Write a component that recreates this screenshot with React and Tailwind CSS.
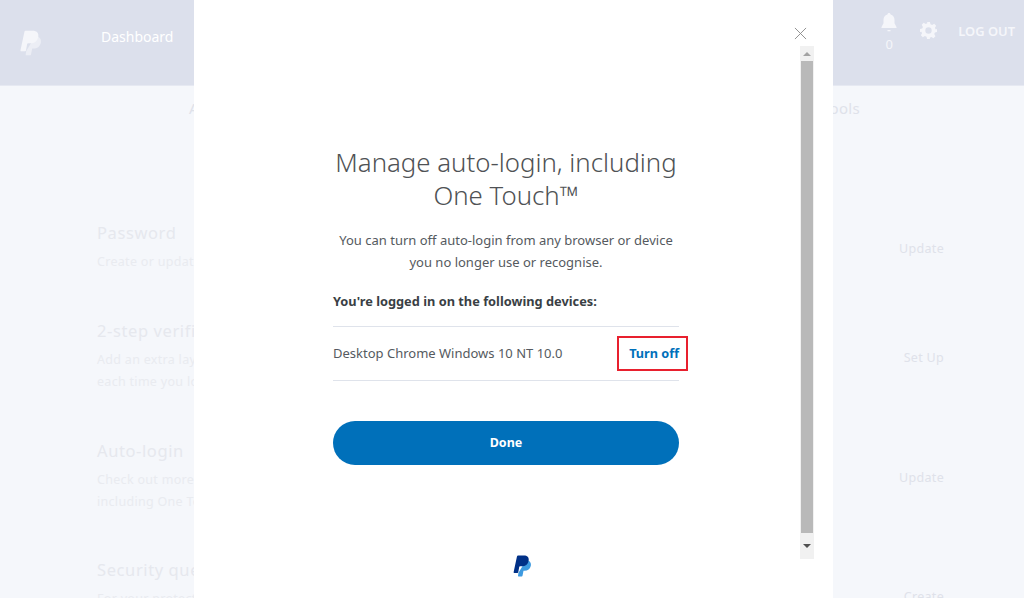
const font = { fontFamily: '"Noto Sans", "Open Sans", sans-serif' };

function PayPalMark({ className, back, front }) {
  return (
    <svg viewBox="0 0 20 24" className={className}>
      <path fill={back} d="M16.6 6.300c1.900 1 3 2.900 2.500 5.400-.8 3.600-3.400 5.400-6.900 5.400h-1.100L10 22.600c-.1.500-.4.800-.9.800H5.700c-.5 0-.7-.4-.6-.9l.5-3.100 7-11.500z" />
      <path fill={front} d="M5.300.6h6.200c3.600 0 5.900 1.900 5.200 5.600-.8 4.100-3.500 6.100-7.400 6.100H7.300c-.5 0-.8.3-.9.8l-1 5.700c-.1.500-.4.800-.9.800H1c-.5 0-.8-.4-.7-.9L3.900 1.800C4 1 4.500.6 5.300.6z" />
    </svg>
  );
}

function Row({ title, lines, action, className }) {
  return (
    <div className={`flex items-center justify-between ${className}`}>
      <div>
        <div className="text-[16.5px] leading-6 tracking-[0.6px] text-[#e6e8ee]">{title}</div>
        <div className="mt-[6px] text-[12.5px] leading-[22px] tracking-[0.3px] text-[#e9ebf0]">
          {lines.map((l) => (
            <div key={l}>{l}</div>
          ))}
        </div>
      </div>
      <div className="pt-[3px] text-[12.5px] leading-[18px] tracking-[0.3px] text-[#dfe2ea]">{action}</div>
    </div>
  );
}

export default function App() {
  return (
    <div className="relative h-[598px] w-[1024px] overflow-hidden bg-[#f5f7fb]" style={font}>
      <header className="flex h-[86px] items-start border-b border-[#e6e9f2] bg-[#dce0ec] text-white">
        <PayPalMark className="ml-[20px] mt-[30px] h-[26px] w-[22px]" back="#eceef5" front="#f5f6fa" />
        <div className="ml-[59px] mt-[27px] text-[14px] leading-5">Dashboard</div>
        <div className="ml-auto mt-[13px] flex flex-col items-center">
          <svg viewBox="0 0 16 20" className="h-[20px] w-[16px]" fill="#f5f6fa">
            <path d="M8 0c.9 0 1.500.6 1.600 1.500 2.500.7 3.900 2.700 3.900 5.500v3.300L15.500 14v1H.5v-1l2-3.700V7c0-2.800 1.400-4.800 3.900-5.500C6.500.6 7.100 0 8 0zM6.500 17h3v1.300h-3z" />
          </svg>
          <div className="mt-[1px] text-[13px] leading-5 text-[#f5f6fa]">0</div>
        </div>
        <svg viewBox="0 0 24 24" className="ml-[23px] mt-[22px] h-[17px] w-[17px]" fill="#f5f6fa">
          <path fillRule="evenodd" d="M10 0h4l.8 3.200 2.300 1 2.900-1.700 2.800 2.800-1.700 2.900 1 2.300L24 10v4l-2.900.8-1 2.300 1.700 2.900-2.800 2.800-2.900-1.700-2.300 1L14 24h-4l-.8-3.100-2.300-1-2.900 1.700-2.800-2.800 1.700-2.900-1-2.300L0 14v-4l3.100-.8 1-2.300-1.700-2.900 2.800-2.800 2.900 1.700 2.300-1zM12 7.500a4.500 4.500 0 1 0 0 9 4.500 4.500 0 0 0 0-9z" />
        </svg>
        <div className="ml-[21px] mr-[9px] mt-[21px] text-[12.9px] font-semibold leading-5 text-[#f5f6fa]">LOG OUT</div>
      </header>

      <nav className="ml-[189px] mr-[164px] mt-[12px] flex justify-between text-[15px] leading-5 tracking-[0.3px] text-[#dfe2ea]">
        <span>Account</span>
        <span>Seller tools</span>
      </nav>

      <main className="ml-[97px] mr-[80px] mt-[103px]">
        <Row title="Password" lines={["Create or update your"]} action="Update" />
        <Row title="2-step verification" lines={["Add an extra layer of", "each time you log in."]} action="Set Up" className="mt-[46px]" />
        <Row title="Auto-login" lines={["Check out more about", "including One Touch."]} action="Update" className="mt-[46px]" />
        <Row title="Security questions" lines={["For your protection", "we may ask you these."]} action="Create" className="mt-[45px]" />
      </main>

      <div className="absolute inset-y-0 left-[194px] flex w-[639px] bg-white">
        <div className="flex w-[606px] flex-col pl-[139px] pr-[121px] pt-[146px]">
          <h1 className="w-[346px] whitespace-nowrap text-center text-[25.8px] font-light leading-[33px] text-[#4f5255]">
            Manage auto-login, including
            <br />
            One Touch™
          </h1>
          <p className="mt-[17px] whitespace-nowrap text-center text-[13px] leading-[22px] text-[#555a60]">
            You can turn off auto-login from any browser or device
            <br />
            you no longer use or recognise.
          </p>
          <div className="mt-[18px] text-[12.8px] font-bold leading-5 text-[#3a3f45]">You're logged in on the following devices:</div>
          <div className="mt-[15px] flex h-[55px] items-center justify-between border-y border-[#dfe3eb] text-[13px] text-[#555a60]">
            <span>Desktop Chrome Windows 10 NT 10.0</span>
            <span className="relative text-[12.7px] font-bold leading-[19px] text-[#0070ba]">
              Turn off
              <span className="absolute -left-[12px] -right-[9px] -inset-y-[8px] border-2 border-[#e8202e]" />
            </span>
          </div>
          <button className="mt-[40px] h-[44px] w-[346px] shrink-0 rounded-full bg-[#0070ba] text-[12.5px] font-bold text-white">Done</button>
          <PayPalMark className="ml-[180px] mt-[90px] h-[22px] w-[19px] shrink-0" back="#3d9ae0" front="#003087" />
        </div>
        <div className="flex flex-col">
          <svg viewBox="0 0 14 14" className="-ml-[6px] mt-[27px] h-[13px] w-[13px]" stroke="#8a8a8a" strokeWidth="1" fill="none">
            <path d="M1 1l12 12M13 1L1 13" />
          </svg>
          <div className="mt-[6px] flex h-[513px] w-[14px] flex-col bg-[#f1f1f1]">
            <div className="flex h-[15px] items-center justify-center">
              <div className="h-0 w-0 border-x-[4px] border-b-[4px] border-x-transparent border-b-[#a3a3a3]" />
            </div>
            <div className="mx-[1px] h-[472px] bg-[#b9b9b9]" />
            <div className="flex flex-1 items-center justify-center">
              <div className="h-0 w-0 border-x-[4px] border-t-[4px] border-x-transparent border-t-[#505050]" />
            </div>
          </div>
        </div>
      </div>
    </div>
  );
}
